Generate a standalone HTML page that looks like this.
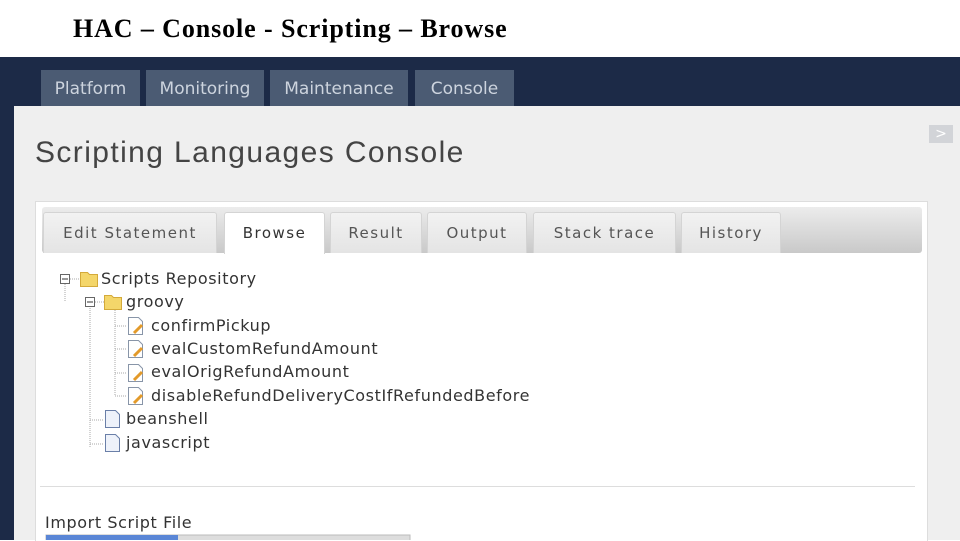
<!DOCTYPE html><html><head><style>
body{margin:0;width:960px;height:540px;overflow:hidden;position:relative;background:#fff;font-family:"DejaVu Sans","Liberation Sans",sans-serif}
.a{position:absolute}
.h{left:73px;top:14px;font-family:"Liberation Serif",serif;font-weight:bold;font-size:26px;letter-spacing:0.9px;color:#000}
.nav{left:0;top:57px;width:960px;height:483px;background:#1c2a47}
.tt{top:70px;height:36px;background:#4b5b73;color:#cdd4de;font-size:17px;line-height:38px;text-align:center}
.pan{left:14px;top:106px;width:946px;height:434px;background:#efefef}
.box{left:35px;top:201px;width:891px;height:339px;background:#fff;border:1px solid #ddd;border-bottom:none}
.bar{left:42px;top:207px;width:880px;height:46px;background:linear-gradient(#ececec,#c9c9c9);border-radius:3px}
.t{top:212px;height:41px;background:linear-gradient(#f2f2f2,#e4e4e4);border:1px solid #d4d4d4;border-bottom:none;border-radius:3px 3px 0 0;box-sizing:border-box;color:#555;font-size:15px;letter-spacing:1.5px;line-height:40px;text-align:center}
.r{font-size:16px;letter-spacing:0.6px;color:#333;height:20px;line-height:20px}
</style></head><body>
<div class="a h">HAC – Console - Scripting – Browse</div>
<div class="a nav"></div>
<div class="a tt" style="left:41px;width:99px">Platform</div>
<div class="a tt" style="left:146px;width:118px">Monitoring</div>
<div class="a tt" style="left:270px;width:138px">Maintenance</div>
<div class="a tt" style="left:415px;width:99px">Console</div>
<div class="a pan"></div>
<div class="a" style="left:929px;top:125px;width:24px;height:18px;background:#d2d4d8;color:#fff;font-size:14px;line-height:18px;text-align:center">&gt;</div>
<div class="a" style="left:35px;top:136px;font-size:30px;letter-spacing:1.4px;color:#444;font-family:'Liberation Sans',sans-serif">Scripting Languages Console</div>
<div class="a box"></div>
<div class="a bar"></div>
<div class="a t" style="left:43px;width:174px">Edit Statement</div>
<div class="a t" style="left:224px;width:101px;background:#fff;color:#333;height:42px">Browse</div>
<div class="a t" style="left:330px;width:92px">Result</div>
<div class="a t" style="left:427px;width:100px">Output</div>
<div class="a t" style="left:533px;width:143px">Stack trace</div>
<div class="a t" style="left:681px;width:100px">History</div>
<svg class="a" style="left:0;top:0" width="960" height="540">
<g stroke="#aaa" stroke-dasharray="1,1" fill="none">
<path d="M65 284V302M90 308V448M90 420H104M90 444H104M115 308V396M115 326H126M115 349H126M115 373H126M115 396H126M70 279H80M95 302H104"/></g>
<g fill="#fff" stroke="#666"><rect x="60.5" y="274.5" width="9" height="9"/><rect x="85.5" y="297.5" width="9" height="9"/></g>
<path d="M62 279H68M87 302H93" stroke="#333"/>
<g fill="#f4d66a" stroke="#d4aa3a"><path d="M80.5 272.5h7l2 2h8v12h-17z"/><path d="M104.5 295.5h7l2 2h8v12h-17z"/></g>
<g fill="#fff" stroke="#8895a8"><path d="M128.5 317.5h10l4 4v13h-14z"/><path d="M128.5 340.5h10l4 4v13h-14z"/><path d="M128.5 364.5h10l4 4v13h-14z"/><path d="M128.5 387.5h10l4 4v13h-14z"/></g>
<g stroke="#e39a2a" stroke-width="3"><path d="M134 333l8-8M134 356l8-8M134 380l8-8M134 403l8-8"/></g>
<g fill="#eef2fa" stroke="#6a7fa8"><path d="M105.5 410.5h10l4 4v13h-14z"/><path d="M105.5 434.5h10l4 4v13h-14z"/></g>
<path d="M40 486.5H915" stroke="#ddd"/>
<rect x="46" y="535" width="364" height="6" fill="#ddd" stroke="#bbb"/><rect x="46" y="535" width="132" height="6" fill="#5a86d6"/>
</svg>
<div class="a r" style="left:101px;top:269px">Scripts Repository</div>
<div class="a r" style="left:126px;top:292px">groovy</div>
<div class="a r" style="left:151px;top:316px">confirmPickup</div>
<div class="a r" style="left:151px;top:339px">evalCustomRefundAmount</div>
<div class="a r" style="left:151px;top:362px">evalOrigRefundAmount</div>
<div class="a r" style="left:151px;top:386px">disableRefundDeliveryCostIfRefundedBefore</div>
<div class="a r" style="left:126px;top:409px">beanshell</div>
<div class="a r" style="left:126px;top:433px">javascript</div>
<div class="a r" style="left:45px;top:513px">Import Script File</div>
</body></html>
